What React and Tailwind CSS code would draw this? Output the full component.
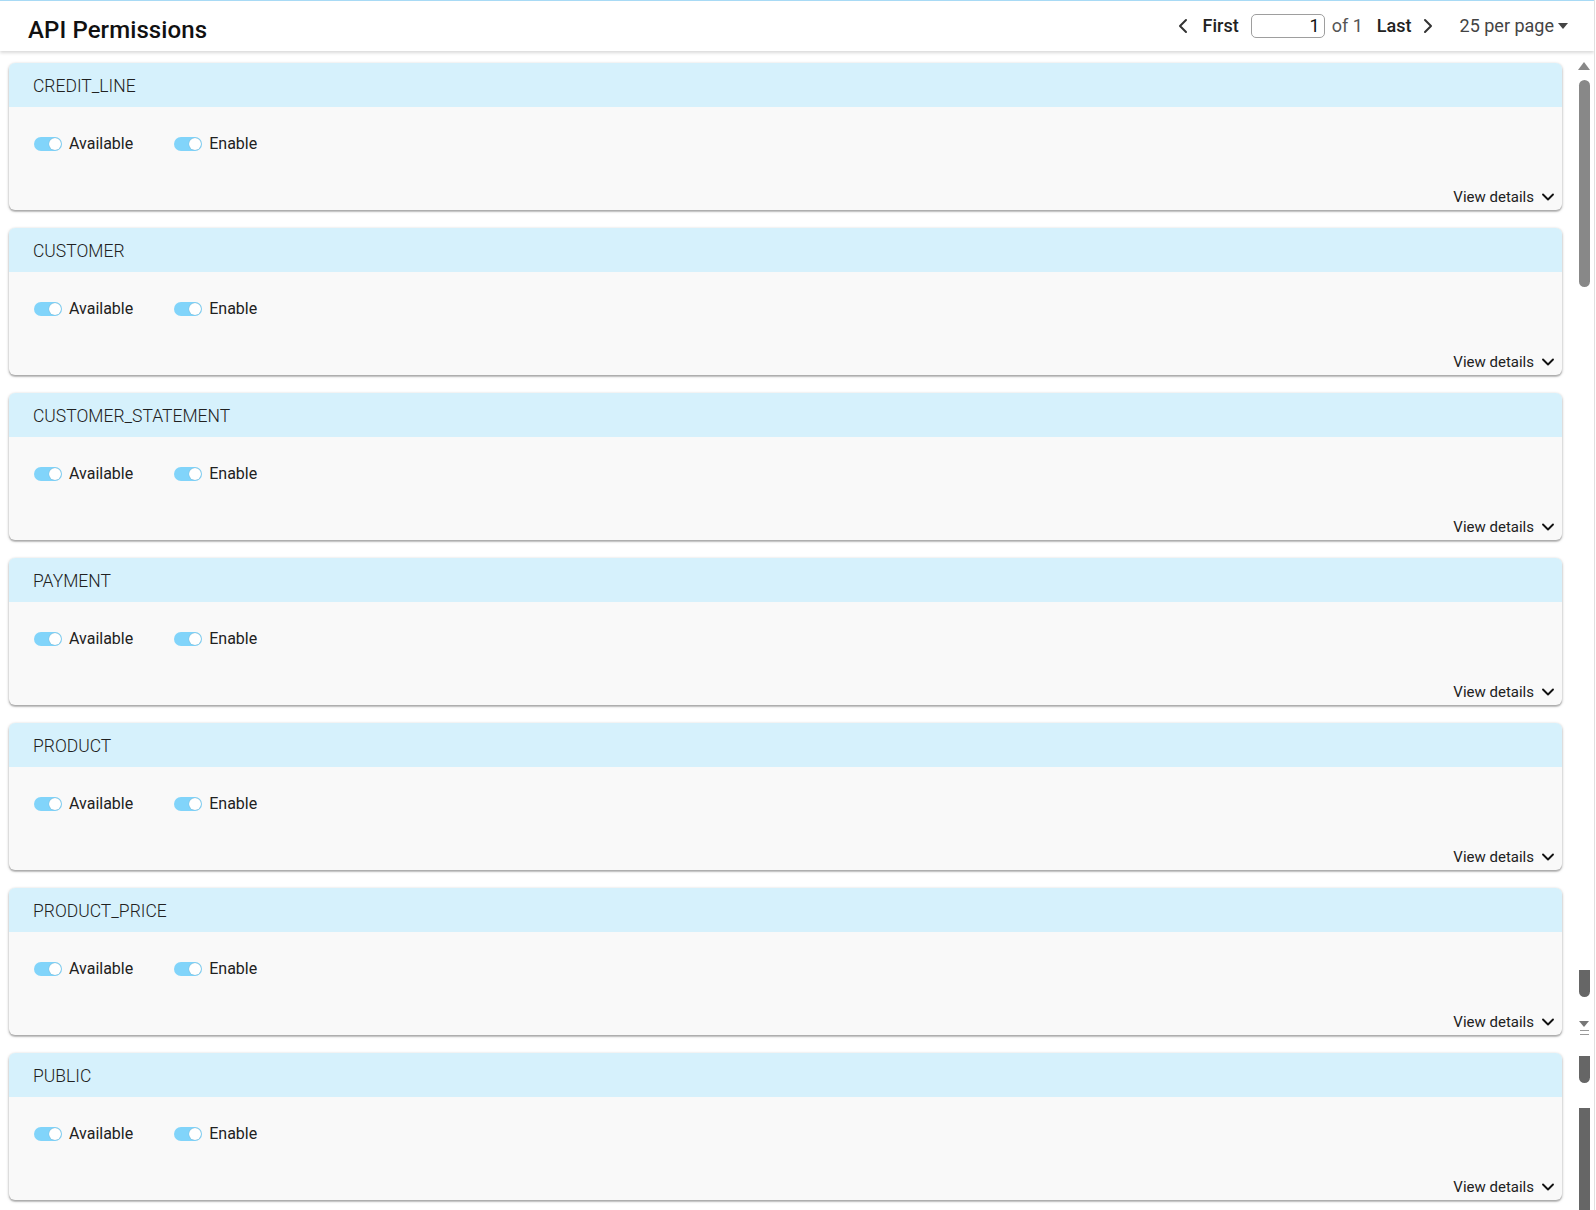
import { ChevronLeft, ChevronRight, ChevronDown } from 'lucide-react';

const apis = [
    'CREDIT_LINE',
    'CUSTOMER',
    'CUSTOMER_STATEMENT',
    'PAYMENT',
    'PRODUCT',
    'PRODUCT_PRICE',
    'PUBLIC',
];

function Toggle({ label }) {
    return (
        <div className="flex items-center">
            <span className="relative w-[28px] h-[14px] rounded-full bg-[#81d4fa] flex items-center justify-end pr-[1px]">
                <span className="w-[12px] h-[12px] rounded-full bg-white shadow-[0_0_1px_rgba(0,0,0,0.3)]"></span>
            </span>
            <span className="ml-[7px] text-[16px] text-[#212121]">{label}</span>
        </div>
    );
}

function ApiCard({ name }) {
    return (
        <div className="rounded-md bg-[#f9f9f9] overflow-hidden shadow-[0_1px_3px_rgba(0,0,0,0.35),0_2px_1px_rgba(0,0,0,0.12)]">
            <div className="h-[44px] px-6 pt-[2px] flex items-center bg-[#d6f1fc] text-[17.5px] font-light text-[#212121]">
                {name}
            </div>
            <div className="h-[103px] flex flex-col pt-[27px] pb-[3px] pr-[4px]">
                <div className="flex items-center gap-[41px] pl-[25px] h-5">
                    <Toggle label="Available" />
                    <Toggle label="Enable" />
                </div>
                <div className="mt-auto flex items-center justify-end h-5 text-[15px] text-[#212121]">
                    View details
                    <ChevronDown size={20} strokeWidth={2.25} className="ml-[4px] text-[#111]" />
                </div>
            </div>
        </div>
    );
}

function Scrollbar() {
    return (
        <div className="w-[18px] h-full flex flex-col items-center">
            <div className="mt-[11px] w-0 h-0 border-l-[6px] border-r-[6px] border-b-[8px] border-l-transparent border-r-transparent border-b-[#888]"></div>
            <div className="mt-[10px] w-[11px] h-[207px] shrink-0 rounded-full bg-[#888]"></div>
            <div className="mt-[683px] w-[11px] h-[27px] shrink-0 rounded-b-full bg-[#666]"></div>
            <div className="mt-[24px] w-0 h-0 border-l-[5px] border-r-[5px] border-t-[6px] border-l-transparent border-r-transparent border-t-[#777]"></div>
            <div className="mt-[3px] w-[9px] h-[1px] bg-[#999]"></div>
            <div className="mt-[3px] w-[9px] h-[1px] bg-[#999]"></div>
            <div className="mt-[21px] w-[11px] h-[27px] shrink-0 rounded-b-full bg-[#666]"></div>
            <div className="mt-[25px] w-[11px] flex-1 bg-[#666]"></div>
        </div>
    );
}

export default function App() {
    return (
        <div className="w-[1595px] h-[1210px] overflow-hidden bg-white border-r border-[#e0e0e0] flex flex-col font-['Roboto',sans-serif]">
            <div className="h-[51px] shrink-0 border-t border-[#a8daf5] bg-white flex items-center justify-between pl-[28px] pr-[26px] shadow-[0_2px_3px_rgba(0,0,0,0.15)] relative z-10">
                <h1 className="text-[24px] font-medium text-[#111] mt-[7px] tracking-[0.1px]">API Permissions</h1>
                <div className="flex items-center text-[18px] -mt-[1px]">
                    <ChevronLeft size={24} strokeWidth={2} className="text-[#333]" />
                    <span className="ml-[8px] font-medium text-[#222]">First</span>
                    <div className="ml-[12px] w-[74px] h-[24px] rounded-[5px] border border-[#9e9e9e] text-right pr-[4px] leading-[22px] text-[#111]">1</div>
                    <span className="ml-[7px] text-[#555]">of 1</span>
                    <span className="ml-[14px] font-medium text-[#222]">Last</span>
                    <ChevronRight size={24} strokeWidth={2} className="ml-[4px] text-[#333]" />
                    <span className="ml-[20px] text-[#444]">25 per page</span>
                    <span className="ml-[4px] w-0 h-0 border-l-[5px] border-r-[5px] border-t-[6px] border-l-transparent border-r-transparent border-t-[#444]"></span>
                </div>
            </div>
            <div className="flex-1 flex min-h-0">
                <div className="w-[1563px] pl-[9px] pr-[1px] pt-[12px] flex flex-col gap-[18px]">
                    {apis.map(a => (
                        <ApiCard key={a} name={a} />
                    ))}
                </div>
                <div className="ml-[12px] h-full">
                    <Scrollbar />
                </div>
            </div>
        </div>
    );
}
